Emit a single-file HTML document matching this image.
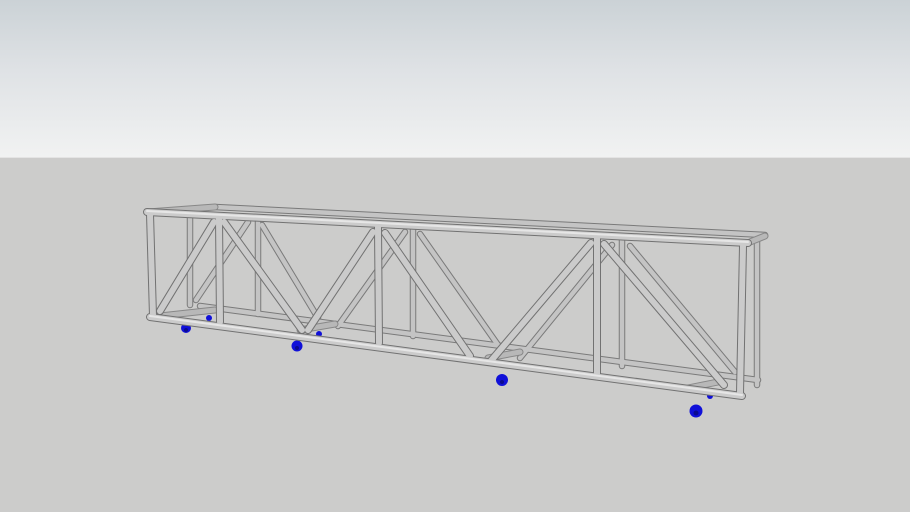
<!DOCTYPE html>
<html><head><meta charset="utf-8"><style>
html,body{margin:0;padding:0;width:910px;height:512px;overflow:hidden}
svg{display:block}
</style></head><body>
<svg width="910" height="512" viewBox="0 0 910 512" xmlns="http://www.w3.org/2000/svg">
<defs>
<linearGradient id="sky" x1="0" y1="0" x2="0" y2="1">
<stop offset="0" stop-color="#cbd2d6"/>
<stop offset="0.45" stop-color="#dfe2e5"/>
<stop offset="1" stop-color="#f1f2f2"/>
</linearGradient>
</defs>
<rect x="0" y="0" width="910" height="157" fill="url(#sky)"/>
<rect x="0" y="157" width="910" height="355" fill="#cccccb"/>
<rect x="0" y="157" width="910" height="1" fill="#e4e4e4"/>

<g fill="#1010d8">
<circle cx="186" cy="328" r="5"/>
<circle cx="209" cy="318" r="3"/>
<circle cx="297" cy="346" r="5.5"/>
<circle cx="319" cy="334" r="3"/>
<circle cx="502" cy="380" r="6"/>
<circle cx="519" cy="366" r="3"/>
<circle cx="696" cy="411" r="6.5"/>
<circle cx="710" cy="396" r="3"/>
</g>
<g fill="#0a0a90">
<circle cx="186" cy="330" r="2"/>
<circle cx="297" cy="348" r="2"/>
<circle cx="502" cy="382" r="2"/>
<circle cx="696" cy="413" r="2.5"/>
</g>

<g stroke-linecap="round" fill="none">
<g stroke="#7a7a7a" stroke-width="6.5">
<line x1="215" y1="207" x2="765" y2="235"/>
<line x1="200" y1="306" x2="758" y2="380"/>
<line x1="190" y1="215" x2="190" y2="305"/>
<line x1="258" y1="222" x2="258" y2="314"/>
<line x1="413" y1="230" x2="413" y2="336"/>
<line x1="622" y1="240" x2="622" y2="366"/>
<line x1="757" y1="240" x2="757" y2="385"/>
<line x1="248" y1="222" x2="196" y2="300"/>
<line x1="262" y1="225" x2="318" y2="318"/>
<line x1="405" y1="232" x2="338" y2="326"/>
<line x1="420" y1="234" x2="498" y2="345"/>
<line x1="612" y1="245" x2="520" y2="358"/>
<line x1="630" y1="246" x2="735" y2="372"/>
</g>
<g stroke="#c4c4c4" stroke-width="4.5">
<line x1="215" y1="207" x2="765" y2="235"/>
<line x1="200" y1="306" x2="758" y2="380"/>
<line x1="190" y1="215" x2="190" y2="305"/>
<line x1="258" y1="222" x2="258" y2="314"/>
<line x1="413" y1="230" x2="413" y2="336"/>
<line x1="622" y1="240" x2="622" y2="366"/>
<line x1="757" y1="240" x2="757" y2="385"/>
<line x1="248" y1="222" x2="196" y2="300"/>
<line x1="262" y1="225" x2="318" y2="318"/>
<line x1="405" y1="232" x2="338" y2="326"/>
<line x1="420" y1="234" x2="498" y2="345"/>
<line x1="612" y1="245" x2="520" y2="358"/>
<line x1="630" y1="246" x2="735" y2="372"/>
</g>
<g stroke="#888" stroke-width="7">
<line x1="160" y1="316" x2="215" y2="310"/>
<line x1="300" y1="330" x2="335" y2="324"/>
<line x1="488" y1="358" x2="520" y2="352"/>
<line x1="688" y1="388" x2="718" y2="382"/>
<line x1="148" y1="212" x2="215" y2="207"/>
<line x1="745" y1="244" x2="765" y2="236"/>
</g>
<g stroke="#b8b8b8" stroke-width="5">
<line x1="160" y1="316" x2="215" y2="310"/>
<line x1="300" y1="330" x2="335" y2="324"/>
<line x1="488" y1="358" x2="520" y2="352"/>
<line x1="688" y1="388" x2="718" y2="382"/>
<line x1="148" y1="212" x2="215" y2="207"/>
<line x1="745" y1="244" x2="765" y2="236"/>
</g>
<g stroke="#727272" stroke-width="8">
<line x1="147" y1="212" x2="748" y2="243"/>
<line x1="150" y1="317" x2="742" y2="396"/>
<line x1="150" y1="214" x2="153" y2="316"/>
<line x1="219" y1="218" x2="220" y2="322"/>
<line x1="378" y1="227" x2="379" y2="343"/>
<line x1="597" y1="238" x2="597" y2="375"/>
<line x1="743" y1="246" x2="740" y2="393"/>
<line x1="214" y1="222" x2="160" y2="311"/>
<line x1="224" y1="222" x2="302" y2="330"/>
<line x1="373" y1="232" x2="308" y2="330"/>
<line x1="385" y1="233" x2="470" y2="356"/>
<line x1="591" y1="243" x2="490" y2="362"/>
<line x1="604" y1="244" x2="724" y2="385"/>
</g>
<g stroke="#cbcbcb" stroke-width="6">
<line x1="147" y1="212" x2="748" y2="243"/>
<line x1="150" y1="317" x2="742" y2="396"/>
<line x1="150" y1="214" x2="153" y2="316"/>
<line x1="219" y1="218" x2="220" y2="322"/>
<line x1="378" y1="227" x2="379" y2="343"/>
<line x1="597" y1="238" x2="597" y2="375"/>
<line x1="743" y1="246" x2="740" y2="393"/>
<line x1="214" y1="222" x2="160" y2="311"/>
<line x1="224" y1="222" x2="302" y2="330"/>
<line x1="373" y1="232" x2="308" y2="330"/>
<line x1="385" y1="233" x2="470" y2="356"/>
<line x1="591" y1="243" x2="490" y2="362"/>
<line x1="604" y1="244" x2="724" y2="385"/>
</g>
<g stroke="#e6e6e6" stroke-width="2">
<line x1="147" y1="211" x2="748" y2="242"/>
<line x1="150" y1="316" x2="742" y2="395"/>
</g>
</g>
</svg>
</body></html>
